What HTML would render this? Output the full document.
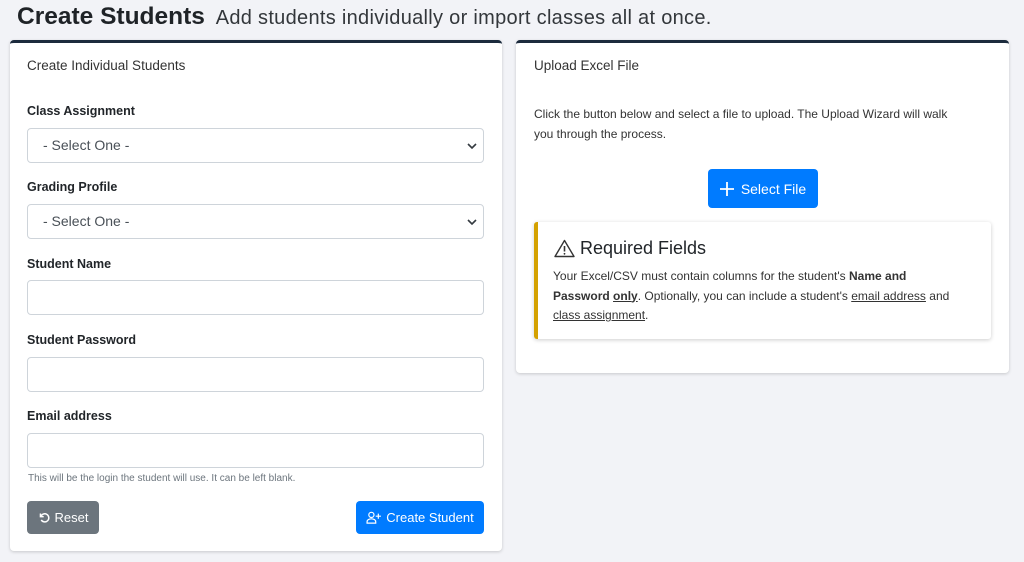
<!DOCTYPE html>
<html><head><style>
*{box-sizing:border-box;margin:0;padding:0}
body{width:1024px;height:562px;overflow:hidden;background:#f2f3f7;font-family:"Liberation Sans",sans-serif;color:#212529;position:relative}
.a{position:absolute}
.card{position:absolute;background:#fff;border-top:3px solid #1c2b3d;border-radius:4px;box-shadow:0 1px 3px rgba(0,0,0,.18)}
.lbl{position:absolute;left:27px;font-size:12.5px;font-weight:bold;color:#212529}
.inp{position:absolute;left:27px;width:457px;height:35px;border:1px solid #ced4da;border-radius:4px;background:#fff;font-size:14px;color:#495057;padding:8px 15px}
.btn{position:absolute;border-radius:4px;color:#fff;font-size:13px;display:flex;align-items:center;justify-content:center;gap:4px}
</style></head><body>
<div class="a" style="left:17px;top:3px;font-size:24.5px;font-weight:bold;color:#1f2327">Create Students <span style="font-size:20px;font-weight:normal;color:#33373b;margin-left:4px;letter-spacing:0.3px">Add students individually or import classes all at once.</span></div>

<div class="card" style="left:10px;top:40px;width:492px;height:511px">
<div class="a" style="left:17px;top:15px;font-size:13.5px;color:#333">Create Individual Students</div>
</div>
<div class="lbl" style="top:104px">Class Assignment</div>
<div class="inp" style="top:128px">- Select One -<svg class="a" style="right:6px;top:13px" width="10" height="8" viewBox="0 0 10 8"><path d="M1 2l4 4 4-4" fill="none" stroke="#343a40" stroke-width="1.6"/></svg></div>
<div class="lbl" style="top:180px">Grading Profile</div>
<div class="inp" style="top:204px">- Select One -<svg class="a" style="right:6px;top:13px" width="10" height="8" viewBox="0 0 10 8"><path d="M1 2l4 4 4-4" fill="none" stroke="#343a40" stroke-width="1.6"/></svg></div>
<div class="lbl" style="top:257px">Student Name</div>
<div class="inp" style="top:280px"></div>
<div class="lbl" style="top:333px">Student Password</div>
<div class="inp" style="top:357px"></div>
<div class="lbl" style="top:409px">Email address</div>
<div class="inp" style="top:433px"></div>
<div class="a" style="left:28px;top:473px;font-size:10px;color:#6c757d">This will be the login the student will use. It can be left blank.</div>
<div class="btn" style="left:27px;top:501px;width:72px;height:33px;background:#6c757d"><svg width="13" height="13" viewBox="0 0 16 16"><path d="M3 3v4h4M3.5 7A5 5 0 1 1 4 11" fill="none" stroke="#fff" stroke-width="1.8"/></svg>Reset</div>
<div class="btn" style="left:356px;top:501px;width:128px;height:33px;background:#007bff"><svg width="16" height="13" viewBox="0 0 18 15"><circle cx="6" cy="4.5" r="3" fill="none" stroke="#fff" stroke-width="1.4"/><path d="M1 14v-1.5c0-2 2-3.5 5-3.5s5 1.5 5 3.5V14z" fill="none" stroke="#fff" stroke-width="1.4"/><path d="M14 3v6M11 6h6" stroke="#fff" stroke-width="1.4"/></svg>Create Student</div>

<div class="card" style="left:516px;top:40px;width:493px;height:333px">
<div class="a" style="left:18px;top:15px;font-size:13.5px;color:#333">Upload Excel File</div>
<div class="a" style="left:18px;top:62px;width:428px;font-size:12px;line-height:19.5px;color:#333">Click the button below and select a file to upload. The Upload Wizard will walk you through the process.</div>
</div>
<div class="btn" style="left:708px;top:169px;width:110px;height:39px;background:#007bff;font-size:14px;gap:7px"><svg width="14" height="14" viewBox="0 0 14 14"><path d="M7 0v14M0 7h14" stroke="#fff" stroke-width="1.8"/></svg>Select File</div>
<div class="a" style="left:534px;top:222px;width:457px;height:117px;background:#fff;border-left:4px solid #d4a100;border-radius:3px;box-shadow:0 1px 4px rgba(0,0,0,.2)">
<div class="a" style="left:16px;top:16px;font-size:18px;color:#212529;display:flex;align-items:center;gap:5px"><svg width="21" height="19" viewBox="0 0 21 19"><path d="M10.5 1.5L1 17.5h19z" fill="none" stroke="#333" stroke-width="1.4" stroke-linejoin="round"/><path d="M10.5 7v5.5" stroke="#333" stroke-width="1.6"/><circle cx="10.5" cy="14.8" r="0.9" fill="#333"/></svg>Required Fields</div>
<div class="a" style="left:15px;top:45px;width:400px;font-size:12px;line-height:19.5px;color:#333">Your Excel/CSV must contain columns for the student's <b>Name and Password <u>only</u></b>. Optionally, you can include a student's <u>email address</u> and <u>class assignment</u>.</div>
</div>
</body></html>
